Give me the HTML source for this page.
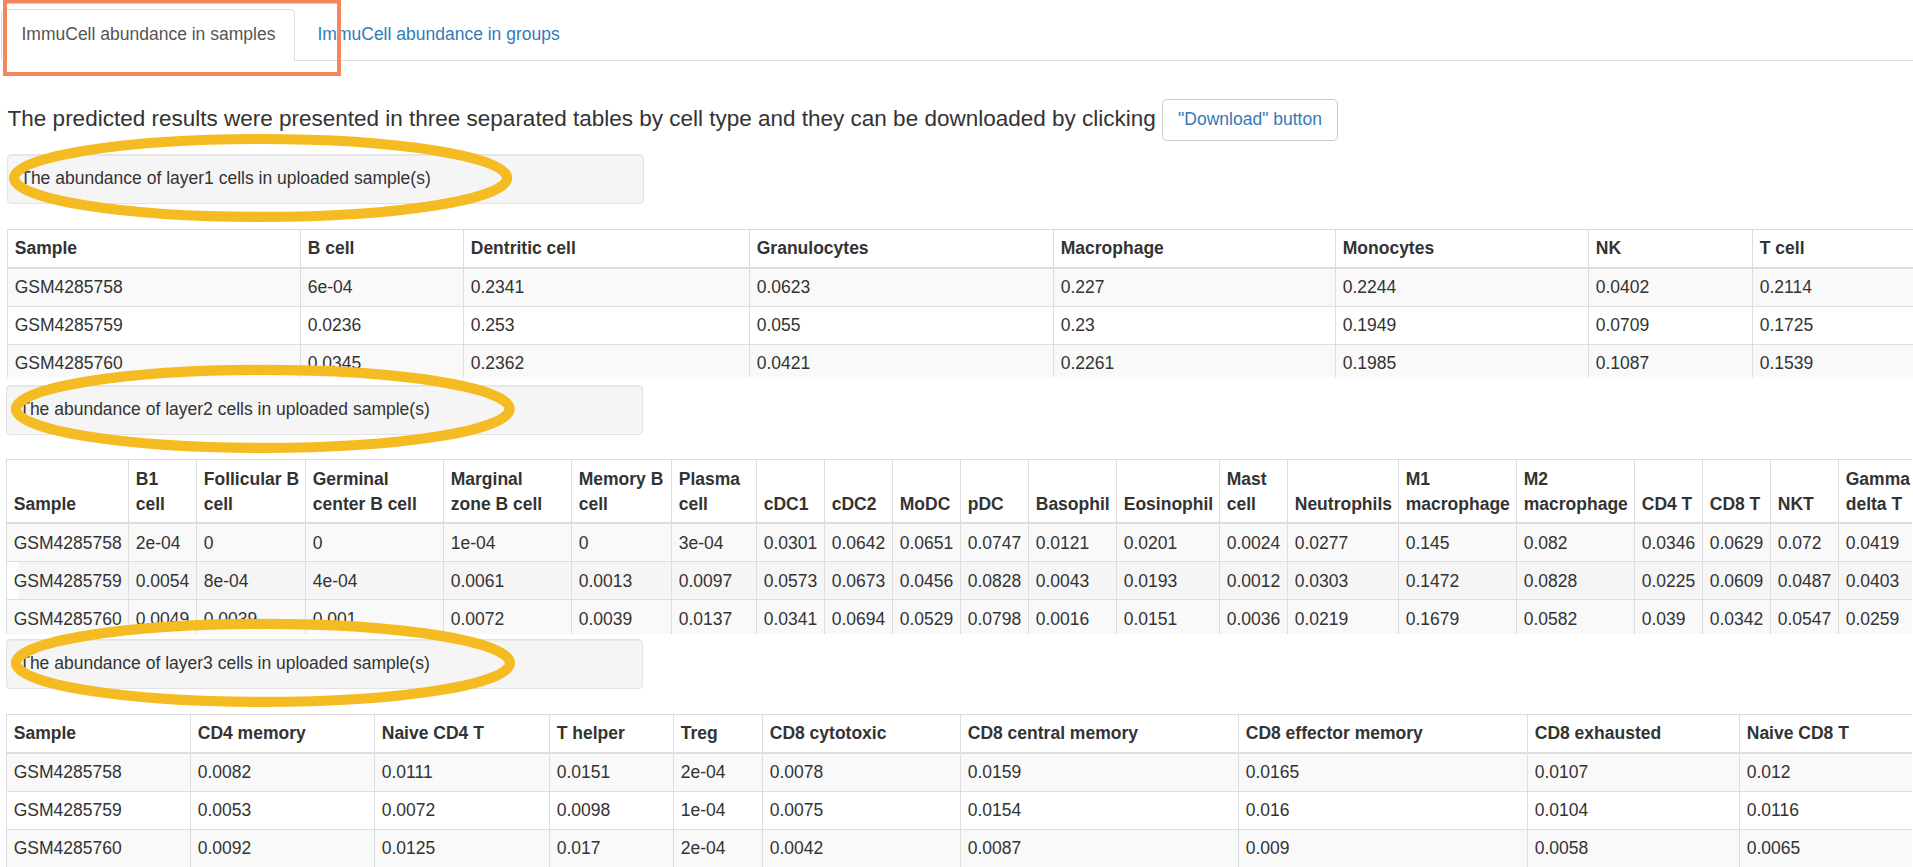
<!DOCTYPE html>
<html lang="en"><head><meta charset="utf-8"><title>ImmuCell abundance</title>
<style>
html,body{margin:0;padding:0;background:#fff;}
body{width:1913px;height:867px;overflow:hidden;position:relative;font-family:"Liberation Sans",sans-serif;font-size:17.5px;line-height:25px;color:#333;}
.abs{position:absolute;}
#navline{left:295px;top:60px;width:1618px;height:1px;background:#ddd;}
#tab1{left:1px;top:9px;width:294px;height:52px;box-sizing:border-box;border:1px solid #ddd;border-bottom:1px solid #fff;border-radius:5px 5px 0 0;background:#fff;color:#555;padding:12px 0 0 19.5px;white-space:nowrap;}
#tab2{left:317.5px;top:22px;color:#337ab7;white-space:nowrap;}
#lead{left:7.6px;top:98px;font-size:22.5px;line-height:42px;white-space:nowrap;color:#333;}
#btn{left:1162px;top:99px;width:176px;height:42px;box-sizing:border-box;border:1px solid #ccc;border-radius:5px;background:#fff;color:#337ab7;text-align:center;line-height:25px;padding-top:7px;white-space:nowrap;}
.well{box-sizing:border-box;height:50px;background:#f5f5f5;border:1px solid #e3e3e3;border-radius:4px;box-shadow:inset 0 1px 1px rgba(0,0,0,.05);padding:11px 0 0 12.2px;white-space:nowrap;color:#333;}
.tw{position:absolute;overflow:hidden;}
table{border-collapse:separate;border-spacing:0;table-layout:fixed;}
th,td{box-sizing:border-box;padding:0 0 0 6.75px;border-left:1px solid #ddd;text-align:left;white-space:nowrap;overflow:visible;}
th{font-weight:bold;vertical-align:bottom;border-top:1px solid #ddd;border-bottom:2px solid #ddd;padding-bottom:6px;background:#fff;}
td{vertical-align:top;border-bottom:1px solid #ddd;padding-top:6px;font-weight:normal;}
th span,td span{position:relative;display:inline-block;}
th.last,td.last{border-right:1px solid #ddd;}
tr.odd td{background:#f9f9f9;}
tr.even td{background:#fff;}
tr.hov td{background:#f5f5f5;}
tr.hov td.patch{background:linear-gradient(to right,#fff 0,#fff 11.6px,#f5f5f5 11.6px);}
svg{position:absolute;left:0;top:0;}
</style></head><body>
<div class="abs" id="navline"></div>
<div class="abs" id="tab1">ImmuCell abundance in samples</div>
<div class="abs" id="tab2">ImmuCell abundance in groups</div>
<div class="abs" id="lead">The predicted results were presented in three separated tables by cell type and they can be downloaded by clicking</div>
<div class="abs" id="btn">"Download" button</div>
<div class="abs well" style="left:7px;top:154px;width:637px">The abundance of layer1 cells in uploaded sample(s)</div>
<div class="tw" style="left:7px;top:229px;width:1906px;height:150px">
<table id="t1" style="width:1993px">
<colgroup>
<col style="width:293px">
<col style="width:163px">
<col style="width:286px">
<col style="width:304px">
<col style="width:282px">
<col style="width:253px">
<col style="width:164px">
<col style="width:248px">
</colgroup>
<thead><tr style="height:40px">
<th><span style="top:0px">Sample</span></th>
<th><span style="top:0px">B cell</span></th>
<th><span style="top:0px">Dentritic cell</span></th>
<th><span style="top:0px">Granulocytes</span></th>
<th><span style="top:0px">Macrophage</span></th>
<th><span style="top:0px">Monocytes</span></th>
<th><span style="top:0px">NK</span></th>
<th><span style="top:0px">T cell</span></th>
</tr></thead><tbody>
<tr class="odd" style="height:38px">
<td><span style="top:0px">GSM4285758</span></td>
<td><span style="top:0px">6e-04</span></td>
<td><span style="top:0px">0.2341</span></td>
<td><span style="top:0px">0.0623</span></td>
<td><span style="top:0px">0.227</span></td>
<td><span style="top:0px">0.2244</span></td>
<td><span style="top:0px">0.0402</span></td>
<td><span style="top:0px">0.2114</span></td>
</tr>
<tr class="even" style="height:38px">
<td><span style="top:0px">GSM4285759</span></td>
<td><span style="top:0px">0.0236</span></td>
<td><span style="top:0px">0.253</span></td>
<td><span style="top:0px">0.055</span></td>
<td><span style="top:0px">0.23</span></td>
<td><span style="top:0px">0.1949</span></td>
<td><span style="top:0px">0.0709</span></td>
<td><span style="top:0px">0.1725</span></td>
</tr>
<tr class="odd" style="height:38px">
<td><span style="top:0px">GSM4285760</span></td>
<td><span style="top:0px">0.0345</span></td>
<td><span style="top:0px">0.2362</span></td>
<td><span style="top:0px">0.0421</span></td>
<td><span style="top:0px">0.2261</span></td>
<td><span style="top:0px">0.1985</span></td>
<td><span style="top:0px">0.1087</span></td>
<td><span style="top:0px">0.1539</span></td>
</tr>
</tbody></table></div>
<div class="abs" style="left:0;top:376px;width:1913px;height:3px;background:linear-gradient(to bottom,rgba(255,255,255,0),#fff)"></div>
<div class="abs well" style="left:6px;top:385px;width:637px">The abundance of layer2 cells in uploaded sample(s)</div>
<div class="tw" style="left:6px;top:459px;width:1906px;height:175px">
<table id="t2" style="width:1906px">
<colgroup>
<col style="width:122px">
<col style="width:68px">
<col style="width:109px">
<col style="width:138px">
<col style="width:128px">
<col style="width:100px">
<col style="width:85px">
<col style="width:68px">
<col style="width:68px">
<col style="width:68px">
<col style="width:68px">
<col style="width:88px">
<col style="width:103px">
<col style="width:68px">
<col style="width:111px">
<col style="width:118px">
<col style="width:118px">
<col style="width:68px">
<col style="width:68px">
<col style="width:68px">
<col style="width:74px">
</colgroup>
<thead><tr style="height:65px">
<th><span style="top:0.5px">Sample</span></th>
<th><span style="top:0.5px">B1<br>cell</span></th>
<th><span style="top:0.5px">Follicular B<br>cell</span></th>
<th><span style="top:0.5px">Germinal<br>center B cell</span></th>
<th><span style="top:0.5px">Marginal<br>zone B cell</span></th>
<th><span style="top:0.5px">Memory B<br>cell</span></th>
<th><span style="top:0.5px">Plasma<br>cell</span></th>
<th><span style="top:0.5px">cDC1</span></th>
<th><span style="top:0.5px">cDC2</span></th>
<th><span style="top:0.5px">MoDC</span></th>
<th><span style="top:0.5px">pDC</span></th>
<th><span style="top:0.5px">Basophil</span></th>
<th><span style="top:0.5px">Eosinophil</span></th>
<th><span style="top:0.5px">Mast<br>cell</span></th>
<th><span style="top:0.5px">Neutrophils</span></th>
<th><span style="top:0.5px">M1<br>macrophage</span></th>
<th><span style="top:0.5px">M2<br>macrophage</span></th>
<th><span style="top:0.5px">CD4 T</span></th>
<th><span style="top:0.5px">CD8 T</span></th>
<th><span style="top:0.5px">NKT</span></th>
<th><span style="top:0.5px">Gamma<br>delta T</span></th>
</tr></thead><tbody>
<tr class="odd" style="height:38px">
<td><span style="top:0.5px">GSM4285758</span></td>
<td><span style="top:0.5px">2e-04</span></td>
<td><span style="top:0.5px">0</span></td>
<td><span style="top:0.5px">0</span></td>
<td><span style="top:0.5px">1e-04</span></td>
<td><span style="top:0.5px">0</span></td>
<td><span style="top:0.5px">3e-04</span></td>
<td><span style="top:0.5px">0.0301</span></td>
<td><span style="top:0.5px">0.0642</span></td>
<td><span style="top:0.5px">0.0651</span></td>
<td><span style="top:0.5px">0.0747</span></td>
<td><span style="top:0.5px">0.0121</span></td>
<td><span style="top:0.5px">0.0201</span></td>
<td><span style="top:0.5px">0.0024</span></td>
<td><span style="top:0.5px">0.0277</span></td>
<td><span style="top:0.5px">0.145</span></td>
<td><span style="top:0.5px">0.082</span></td>
<td><span style="top:0.5px">0.0346</span></td>
<td><span style="top:0.5px">0.0629</span></td>
<td><span style="top:0.5px">0.072</span></td>
<td><span style="top:0.5px">0.0419</span></td>
</tr>
<tr class="even hov" style="height:38px">
<td class="patch"><span style="top:0.5px">GSM4285759</span></td>
<td><span style="top:0.5px">0.0054</span></td>
<td><span style="top:0.5px">8e-04</span></td>
<td><span style="top:0.5px">4e-04</span></td>
<td><span style="top:0.5px">0.0061</span></td>
<td><span style="top:0.5px">0.0013</span></td>
<td><span style="top:0.5px">0.0097</span></td>
<td><span style="top:0.5px">0.0573</span></td>
<td><span style="top:0.5px">0.0673</span></td>
<td><span style="top:0.5px">0.0456</span></td>
<td><span style="top:0.5px">0.0828</span></td>
<td><span style="top:0.5px">0.0043</span></td>
<td><span style="top:0.5px">0.0193</span></td>
<td><span style="top:0.5px">0.0012</span></td>
<td><span style="top:0.5px">0.0303</span></td>
<td><span style="top:0.5px">0.1472</span></td>
<td><span style="top:0.5px">0.0828</span></td>
<td><span style="top:0.5px">0.0225</span></td>
<td><span style="top:0.5px">0.0609</span></td>
<td><span style="top:0.5px">0.0487</span></td>
<td><span style="top:0.5px">0.0403</span></td>
</tr>
<tr class="odd" style="height:39px">
<td><span style="top:0.5px">GSM4285760</span></td>
<td><span style="top:0.5px">0.0049</span></td>
<td><span style="top:0.5px">0.0039</span></td>
<td><span style="top:0.5px">0.001</span></td>
<td><span style="top:0.5px">0.0072</span></td>
<td><span style="top:0.5px">0.0039</span></td>
<td><span style="top:0.5px">0.0137</span></td>
<td><span style="top:0.5px">0.0341</span></td>
<td><span style="top:0.5px">0.0694</span></td>
<td><span style="top:0.5px">0.0529</span></td>
<td><span style="top:0.5px">0.0798</span></td>
<td><span style="top:0.5px">0.0016</span></td>
<td><span style="top:0.5px">0.0151</span></td>
<td><span style="top:0.5px">0.0036</span></td>
<td><span style="top:0.5px">0.0219</span></td>
<td><span style="top:0.5px">0.1679</span></td>
<td><span style="top:0.5px">0.0582</span></td>
<td><span style="top:0.5px">0.039</span></td>
<td><span style="top:0.5px">0.0342</span></td>
<td><span style="top:0.5px">0.0547</span></td>
<td><span style="top:0.5px">0.0259</span></td>
</tr>
</tbody></table></div>
<div class="abs well" style="left:6px;top:639px;width:637px">The abundance of layer3 cells in uploaded sample(s)</div>
<div class="tw" style="left:6px;top:714px;width:1906px;height:153px">
<table id="t3" style="width:1906px">
<colgroup>
<col style="width:184px">
<col style="width:184px">
<col style="width:175px">
<col style="width:124px">
<col style="width:89px">
<col style="width:198px">
<col style="width:278px">
<col style="width:289px">
<col style="width:212px">
<col style="width:173px">
</colgroup>
<thead><tr style="height:40px">
<th><span style="top:0px">Sample</span></th>
<th><span style="top:0px">CD4 memory</span></th>
<th><span style="top:0px">Naive CD4 T</span></th>
<th><span style="top:0px">T helper</span></th>
<th><span style="top:0px">Treg</span></th>
<th><span style="top:0px">CD8 cytotoxic</span></th>
<th><span style="top:0px">CD8 central memory</span></th>
<th><span style="top:0px">CD8 effector memory</span></th>
<th><span style="top:0px">CD8 exhausted</span></th>
<th><span style="top:0px">Naive CD8 T</span></th>
</tr></thead><tbody>
<tr class="odd" style="height:38px">
<td><span style="top:0px">GSM4285758</span></td>
<td><span style="top:0px">0.0082</span></td>
<td><span style="top:0px">0.0111</span></td>
<td><span style="top:0px">0.0151</span></td>
<td><span style="top:0px">2e-04</span></td>
<td><span style="top:0px">0.0078</span></td>
<td><span style="top:0px">0.0159</span></td>
<td><span style="top:0px">0.0165</span></td>
<td><span style="top:0px">0.0107</span></td>
<td><span style="top:0px">0.012</span></td>
</tr>
<tr class="even" style="height:38px">
<td><span style="top:0px">GSM4285759</span></td>
<td><span style="top:0px">0.0053</span></td>
<td><span style="top:0px">0.0072</span></td>
<td><span style="top:0px">0.0098</span></td>
<td><span style="top:0px">1e-04</span></td>
<td><span style="top:0px">0.0075</span></td>
<td><span style="top:0px">0.0154</span></td>
<td><span style="top:0px">0.016</span></td>
<td><span style="top:0px">0.0104</span></td>
<td><span style="top:0px">0.0116</span></td>
</tr>
<tr class="odd" style="height:38px">
<td><span style="top:0px">GSM4285760</span></td>
<td><span style="top:0px">0.0092</span></td>
<td><span style="top:0px">0.0125</span></td>
<td><span style="top:0px">0.017</span></td>
<td><span style="top:0px">2e-04</span></td>
<td><span style="top:0px">0.0042</span></td>
<td><span style="top:0px">0.0087</span></td>
<td><span style="top:0px">0.009</span></td>
<td><span style="top:0px">0.0058</span></td>
<td><span style="top:0px">0.0065</span></td>
</tr>
</tbody></table></div>
<svg width="1913" height="867" viewBox="0 0 1913 867">
<rect x="5" y="1.5" width="334" height="72.5" fill="none" stroke="#f3865f" stroke-width="4"/>
<ellipse cx="260.6" cy="177.98" rx="246.5" ry="38.97" fill="none" stroke="#f4bc22" stroke-width="10.2"/>
<ellipse cx="262.8" cy="408.98" rx="246.8" ry="39.0" fill="none" stroke="#f4bc22" stroke-width="10.25"/>
<ellipse cx="262.95" cy="662.98" rx="246.95" ry="39.0" fill="none" stroke="#f4bc22" stroke-width="10.25"/>
</svg>
</body></html>
